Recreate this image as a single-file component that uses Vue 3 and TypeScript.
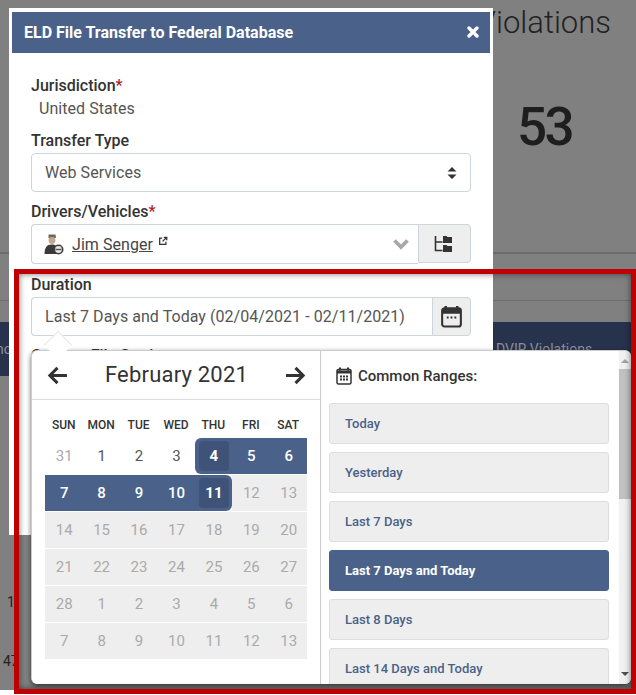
<script setup lang="ts">
interface Day {
  n: number
  cls: string
}

const weekdays = ['SUN', 'MON', 'TUE', 'WED', 'THU', 'FRI', 'SAT']

const rows: Day[][] = [
  [
    { n: 31, cls: 'plain muted' },
    { n: 1, cls: 'plain' },
    { n: 2, cls: 'plain' },
    { n: 3, cls: 'plain' },
    { n: 4, cls: 'range start' },
    { n: 5, cls: 'range' },
    { n: 6, cls: 'range' },
  ],
  [
    { n: 7, cls: 'range' },
    { n: 8, cls: 'range' },
    { n: 9, cls: 'range' },
    { n: 10, cls: 'range' },
    { n: 11, cls: 'range end' },
    { n: 12, cls: 'off' },
    { n: 13, cls: 'off' },
  ],
  [14, 15, 16, 17, 18, 19, 20].map((n) => ({ n, cls: 'off' })),
  [21, 22, 23, 24, 25, 26, 27].map((n) => ({ n, cls: 'off' })),
  [28, 1, 2, 3, 4, 5, 6].map((n) => ({ n, cls: 'off' })),
  [7, 8, 9, 10, 11, 12, 13].map((n) => ({ n, cls: 'off' })),
]

const ranges = ['Today', 'Yesterday', 'Last 7 Days', 'Last 7 Days and Today', 'Last 8 Days', 'Last 14 Days and Today']
const activeRange = 'Last 7 Days and Today'
</script>

<template>
  <div class="page">
    <div class="backdrop">
      <div class="bg-title">Violations</div>
      <div class="bg-count">53</div>
      <div class="bg-line bg-line-a"></div>
      <div class="bg-line bg-line-b"></div>
      <div class="bg-band"><span class="bg-band-left">no</span><span class="bg-band-text">DVIR Violations</span></div>
      <div class="bg-num bg-num-a">1</div>
      <div class="bg-num bg-num-b">47</div>
    </div>

    <div class="modal">
      <div class="modal-head">
        <span>ELD File Transfer to Federal Database</span>
        <svg class="close" viewBox="0 0 12 12" width="12" height="12">
          <path d="M2 2l8 8M10 2l-8 8" stroke="#fff" stroke-width="3.4" stroke-linecap="round" fill="none" />
        </svg>
      </div>
      <div class="modal-body">
        <label class="lbl">Jurisdiction<em>*</em></label>
        <div class="static">United States</div>

        <label class="lbl">Transfer Type</label>
        <div class="ctl">
          <span class="ctl-text">Web Services</span>
          <svg class="sort" viewBox="0 0 10 14" width="10" height="14">
            <path d="M5 1l4.500 4.600H.5zM5 13L.5 8.400h9z" fill="#333" />
          </svg>
        </div>

        <label class="lbl">Drivers/Vehicles<em>*</em></label>
        <div class="ctl-group">
          <div class="ctl ctl-main ctl-tall">
            <svg class="driver" viewBox="0 0 22 22" width="22" height="22">
              <path d="M5.500 1.500h7l.5 3.500H5.500z" fill="#6b6a58" />
              <circle cx="9" cy="7.500" r="3.400" fill="#c2a68c" />
              <path d="M1.500 21c0-6.500 2.500-9.500 7-9.500s5.500 2 6 4V21z" fill="#3a3a3a" />
              <circle cx="15.500" cy="16.500" r="5" fill="#3f3f3f" />
              <circle cx="15.500" cy="16.500" r="3.400" fill="#e4e4e4" />
              <path d="M12.500 15.800h6v1.400h-6z" fill="#5a5a5a" />
            </svg>
            <a class="driver-link">Jim Senger</a>
            <svg class="ext" viewBox="0 0 12 12" width="10" height="10">
              <path d="M5 2.500H2v7.500h7.500V7M7 1.500h3.500V5M10.500 1.500L5.500 6.500" stroke="#333" stroke-width="1.500" fill="none" />
            </svg>
            <svg class="chev" viewBox="0 0 18 12" width="18" height="12">
              <path d="M2.500 2.500L9 9l6.500-6.500" stroke="#a8a8a8" stroke-width="3.800" fill="none" />
            </svg>
          </div>
          <div class="addon addon-tree ctl-tall">
            <svg viewBox="0 0 18 16" width="18" height="16">
              <path d="M1.500 0v14.500h7M1.500 6h7" stroke="#333" stroke-width="1.600" fill="none" />
              <path d="M9 0h3.500l1 1H18v6H9zM9 9h3.500l1 1H18v6H9z" fill="#333" />
            </svg>
          </div>
        </div>

        <label class="lbl lbl-duration">Duration</label>
        <div class="ctl-group">
          <div class="ctl ctl-main ctl-date">
            <span class="ctl-text">Last 7 Days and Today (02/04/2021 - 02/11/2021)</span>
          </div>
          <div class="addon addon-cal">
            <svg viewBox="0 0 22 24" width="21" height="23">
              <path d="M5 1v4M17 1v4" stroke="#333" stroke-width="2.600" />
              <rect x="1.200" y="3.500" width="19.600" height="19" rx="2.500" fill="none" stroke="#333" stroke-width="2.200" />
              <path d="M1.200 6a2.500 2.500 0 012.500-2.500h14.600A2.500 2.500 0 0120.800 6v3H1.200z" fill="#333" />
              <path d="M6 12h2v2H6zM10 12h2v2h-2zM14 12h2v2h-2z" fill="#333" />
            </svg>
          </div>
        </div>

        <label class="lbl lbl-hidden">Custom File Settings</label>
      </div>
    </div>

    <div class="popover">
      <div class="pop-arrow"></div>
      <div class="cal">
        <div class="cal-nav">
          <svg viewBox="0 0 22 20" width="21" height="19">
            <path d="M21 10H3.500M11 2l-8 8 8 8" stroke="#333" stroke-width="3.200" fill="none" />
          </svg>
          <span class="cal-title">February 2021</span>
          <svg viewBox="0 0 22 20" width="21" height="19">
            <path d="M1 10h17.500M11 2l8 8-8 8" stroke="#333" stroke-width="3.200" fill="none" />
          </svg>
        </div>
        <div class="cal-grid-wrap">
          <div class="weekdays">
            <span v-for="d in weekdays" :key="d">{{ d }}</span>
          </div>
          <div v-for="(row, i) in rows" :key="i" class="week">
            <span v-for="(day, j) in row" :key="j" class="day" :class="day.cls"><b>{{ day.n }}</b></span>
          </div>
        </div>
      </div>
      <div class="side">
        <div class="side-scroll">
          <div class="side-head">
            <svg viewBox="0 0 16 18" width="16" height="18">
              <path d="M4 .5v3M12 .5v3" stroke="#333" stroke-width="2" />
              <rect x="1" y="2.500" width="14" height="14.500" rx="1.500" fill="none" stroke="#333" stroke-width="1.500" />
              <path d="M1 3.500h14v3H1z" fill="#333" />
              <path d="M4 8.500h2v2H4zM7 8.500h2v2H7zM10 8.500h2v2h-2zM4 11.500h2v2H4zM7 11.500h2v2H7zM10 11.500h2v2h-2z" fill="#333" />
            </svg>
            <span>Common Ranges:</span>
          </div>
          <div class="range-list">
            <div v-for="r in ranges" :key="r" class="range-btn" :class="{ active: r === activeRange }">{{ r }}</div>
          </div>
        </div>
        <div class="scrollbar">
          <i class="tri tri-up"></i>
          <div class="thumb"></div>
          <i class="tri tri-down"></i>
        </div>
      </div>
    </div>

    <div class="marker"></div>
  </div>
</template>

<style>
html,
body {
  margin: 0;
  background: #fff;
}
</style>

<style scoped>
.page {
  position: relative;
  width: 636px;
  height: 695px;
  overflow: hidden;
  font-family: Roboto, 'Liberation Sans', sans-serif;
  color: #333;
}

.backdrop {
  position: absolute;
  top: 0;
  left: 0;
  right: 0;
  height: 690px;
  overflow: hidden;
  background: #808080;
}

.bg-title {
  position: absolute;
  top: 4px;
  right: 25px;
  font-size: 31px;
  font-weight: 300;
  line-height: 38px;
  color: #222;
}

.bg-count {
  position: absolute;
  top: 95px;
  left: 517px;
  font-size: 53px;
  font-weight: 500;
  line-height: 64px;
  letter-spacing: -2.5px;
  color: #1e1e1e;
}

.bg-line {
  position: absolute;
  left: 0;
  right: 0;
  height: 2px;
  background: #6c6c6c;
}

.bg-line-a {
  top: 252px;
}

.bg-line-b {
  top: 300px;
  height: 1px;
}

.bg-band {
  position: absolute;
  top: 322px;
  left: 0;
  right: 0;
  height: 54px;
  background: #27324c;
  color: #8a8f9b;
  font-size: 14px;
}

.bg-band-left {
  position: absolute;
  left: -4px;
  top: 19px;
}

.bg-band-text {
  position: absolute;
  left: 496px;
  top: 19px;
}

.bg-num {
  position: absolute;
  font-size: 14px;
  color: #222;
}

.bg-num-a {
  left: 7px;
  top: 594px;
}

.bg-num-b {
  left: 3px;
  top: 653px;
}

.modal {
  position: absolute;
  top: 8px;
  left: 9px;
  width: 484px;
  height: 527px;
  background: #fff;
  box-sizing: border-box;
  padding: 4px 3px 0;
  overflow: hidden;
}

.modal-head {
  display: flex;
  align-items: center;
  justify-content: space-between;
  height: 41px;
  padding: 0 11px 0 12px;
  background: #4a6289;
  color: #fff;
  font-size: 16px;
  font-weight: 700;
}

.close {
  margin-top: -2px;
}

.modal-body {
  padding: 22px 19px 0;
}

.lbl {
  display: block;
  font-size: 16px;
  font-weight: 500;
  line-height: 22px;
  color: #333;
}

.lbl em {
  font-style: normal;
  color: #b01c2e;
}

.static {
  margin: 0 0 9px;
  padding-left: 8px;
  font-size: 16px;
  line-height: 24px;
  color: #555;
  letter-spacing: 0.05px;
}

.ctl {
  display: flex;
  align-items: center;
  box-sizing: border-box;
  height: 39px;
  margin: 1px 0 9px;
  padding: 0 13px;
  border: 1px solid #ced4da;
  border-radius: 4px;
  font-size: 16px;
  color: #555;
  letter-spacing: 0.05px;
}

.ctl-text {
  flex: 1;
  white-space: nowrap;
}

.ctl-group {
  display: flex;
  margin: 1px 0 8px;
}

.ctl-main {
  flex: 1;
  min-width: 0;
  margin: 0;
  border-radius: 4px 0 0 4px;
  border-right: none;
}

.ctl-tall {
  height: 40px;
}

.driver {
  margin: 0 7px 0 -2px;
}

.driver-link {
  color: #444;
  text-decoration: underline;
}

.ext {
  margin: -6px 0 0 5px;
}

.chev {
  margin-left: auto;
  margin-right: -5px;
}

.addon {
  display: flex;
  align-items: center;
  justify-content: center;
  box-sizing: border-box;
  height: 39px;
  border: 1px solid #ced4da;
  border-radius: 0 4px 4px 0;
  background: #eeeeee;
}

.addon-tree {
  width: 53px;
  padding-right: 3px;
}

.addon-cal {
  width: 39px;
}

.lbl-duration {
  margin-top: 10px;
}

.lbl-hidden {
  margin-top: 9px;
}

.popover {
  position: absolute;
  top: 350px;
  left: 31px;
  width: 600px;
  height: 334px;
  display: flex;
  background: #fff;
  border: 1px solid #ccc;
  border-bottom: none;
  border-right: none;
  border-radius: 6px;
  box-sizing: border-box;
  box-shadow: 0 2px 5px rgba(0, 0, 0, 0.6);
}

.pop-arrow {
  position: absolute;
  top: -16px;
  left: 16px;
  width: 19px;
  height: 19px;
  background: #fff;
  border-top: 1px solid #e6e6e6;
  border-left: 1px solid #e6e6e6;
  transform: rotate(45deg);
}

.cal {
  position: relative;
  width: 289px;
  flex: none;
  border-right: 1px solid #ccc;
  box-sizing: border-box;
  overflow: hidden;
  background: #fff;
  border-radius: 6px 0 0 6px;
}

.cal-nav {
  display: flex;
  align-items: center;
  justify-content: space-between;
  height: 48px;
  padding: 0 14px 0 15px;
  border-bottom: 1px solid #ddd;
}

.cal-title {
  font-size: 22px;
  line-height: 26px;
  color: #333;
  letter-spacing: 0.2px;
}

.cal-grid-wrap {
  padding: 0 13px;
}

.weekdays {
  display: grid;
  grid-template-columns: repeat(7, 37.43px);
  height: 38px;
  align-items: end;
  padding-bottom: 6px;
  box-sizing: border-box;
  font-size: 12px;
  font-weight: 500;
  text-align: center;
  color: #333;
}

.week {
  display: grid;
  grid-template-columns: repeat(7, 37.43px);
  height: 37px;
}

.day {
  display: flex;
  align-items: center;
  justify-content: center;
  box-sizing: border-box;
  height: 36px;
  padding-left: 1px;
  font-size: 15px;
  color: #555;
}

.day b {
  display: flex;
  align-items: center;
  justify-content: center;
  width: 30px;
  height: 30px;
  font-weight: 400;
  border-radius: 4px;
}

.plain.muted {
  color: #aaa;
}

.off {
  background: #eeeeee;
  color: #aaa;
}

.range {
  background: #4a6289;
  color: #fff;
}

.range b {
  font-weight: 500;
}

.start {
  border-radius: 6px 0 0 6px;
}

.end {
  border-radius: 0 6px 6px 0;
}

.start b,
.end b {
  font-weight: 700;
  background: #3f5379;
}

.side {
  flex: 1;
  min-width: 0;
  display: flex;
}

.side-scroll {
  flex: 1;
  min-width: 0;
  overflow: hidden;
  padding: 0 10px 0 8px;
}

.side-head {
  display: flex;
  align-items: center;
  gap: 6px;
  height: 50px;
  margin-bottom: 2px;
  padding-left: 7px;
  box-sizing: border-box;
  font-size: 15px;
  font-weight: 500;
  color: #333;
}

.range-list {
  display: flex;
  flex-direction: column;
  gap: 8px;
}

.range-btn {
  flex: none;
  box-sizing: border-box;
  height: 41px;
  line-height: 39px;
  padding-left: 15px;
  background: #eeeeee;
  border: 1px solid #ddd;
  border-radius: 3px;
  color: #4a6289;
  font-size: 13px;
  font-weight: 500;
}

.range-btn.active {
  background: #4a6289;
  border-color: #4a6289;
  color: #fff;
  font-weight: 700;
}

.scrollbar {
  position: relative;
  width: 12px;
  flex: none;
  background: #f1f1f1;
  border-radius: 0 6px 6px 0;
}

.thumb {
  position: absolute;
  top: 18px;
  left: 0;
  right: 0;
  height: 130px;
  background: #c1c1c1;
}

.tri {
  position: absolute;
  left: 2px;
  width: 0;
  height: 0;
  border-left: 4px solid transparent;
  border-right: 4px solid transparent;
}

.tri-up {
  top: 8px;
  border-bottom: 4px solid #a3a3a3;
}

.tri-down {
  bottom: 8px;
  border-top: 4px solid #505050;
}

.marker {
  position: absolute;
  top: 269px;
  left: 14px;
  width: 622px;
  height: 425px;
  box-sizing: border-box;
  border: 5px solid #c00000;
  box-shadow: inset 0 0 6px rgba(0, 0, 0, 0.55);
  pointer-events: none;
}
</style>
